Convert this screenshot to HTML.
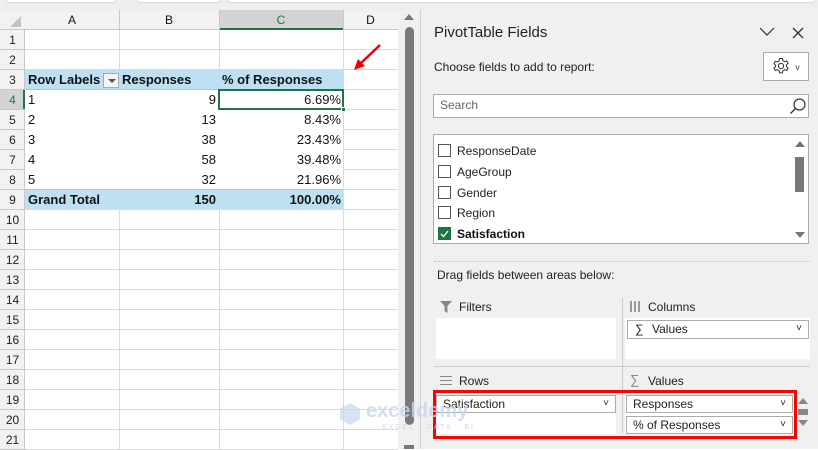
<!DOCTYPE html>
<html><head><meta charset="utf-8"><style>
*{margin:0;padding:0;box-sizing:border-box}
body{width:818px;height:449px;overflow:hidden;background:#fff;font-family:"Liberation Sans",sans-serif;position:relative}
.a{position:absolute}
.hl{position:absolute;height:1px;background:#dadada}
.vl{position:absolute;width:1px;background:#dadada}
.rn{position:absolute;left:0;width:25px;text-align:center;font-size:12px;color:#222;line-height:20px}
.c{position:absolute;font-size:13px;line-height:20px;color:#111}
.p{font-size:12px;color:#222}
.dd{position:absolute;background:#fff;border:1px solid #ababab;font-size:12px;line-height:16px;padding-left:6px;color:#222}
.dd i{position:absolute;right:6px;top:0;font-style:normal;font-size:10px}
.cb{position:absolute;left:438px;width:13px;height:13px;border:1px solid #555;background:#fff}
</style></head><body>
<!-- top strip -->
<div class="a" style="left:0;top:0;width:818px;height:10px;background:#eceef0"></div>
<div class="a" style="left:6px;top:0;width:110px;height:3px;background:#fff;border:1px solid #d6d6d6;border-top:none;border-radius:0 0 3px 3px"></div>
<div class="a" style="left:137px;top:0;width:84px;height:3px;background:#fff;border:1px solid #d6d6d6;border-top:none;border-radius:0 0 3px 3px"></div>
<div class="a" style="left:227px;top:0;width:588px;height:3px;background:#fff;border:1px solid #d6d6d6;border-top:none;border-radius:0 0 3px 3px"></div>
<!-- headers -->
<div class="a" style="left:0;top:10px;width:398px;height:20px;background:#f2f2f2;border-bottom:1px solid #c8c8c8"></div>
<div class="a" style="left:219px;top:10px;width:124px;height:20px;background:#d3d3d3;border-bottom:2px solid #217346"></div>
<div class="a" style="left:0;top:30px;width:25px;height:419px;background:#f2f2f2;border-right:1px solid #c8c8c8"></div>
<div class="a" style="left:0;top:90px;width:25px;height:20px;background:#d3d3d3;border-right:2px solid #217346"></div>
<div class="a" style="left:10px;top:16px;width:0;height:0;border-left:11px solid transparent;border-bottom:11px solid #c4c4c4"></div>
<div class="c" style="left:25px;top:10px;width:94px;text-align:center;font-size:12px">A</div>
<div class="c" style="left:119px;top:10px;width:100px;text-align:center;font-size:12px">B</div>
<div class="c" style="left:219px;top:10px;width:124px;text-align:center;font-size:12px;color:#217346">C</div>
<div class="c" style="left:343px;top:10px;width:55px;text-align:center;font-size:12px">D</div>
<div class="vl" style="left:119px;top:10px;height:20px;background:#c8c8c8"></div>
<div class="vl" style="left:219px;top:10px;height:20px;background:#c8c8c8"></div>
<div class="vl" style="left:343px;top:10px;height:20px;background:#c8c8c8"></div>
<!-- grid -->
<div class="vl" style="left:119px;top:30px;height:419px"></div>
<div class="vl" style="left:219px;top:30px;height:419px"></div>
<div class="vl" style="left:343px;top:30px;height:419px"></div>
<div id="g"></div>
<script>
var s='';for(var i=1;i<=21;i++){var t=30+(i-1)*20;s+='<div class="hl" style="left:25px;top:'+(t+19)+'px;width:373px"></div><div class="hl" style="left:0;top:'+(t+19)+'px;width:25px;background:#c8c8c8"></div><div class="rn" style="top:'+t+'px'+(i==4?';color:#217346':'')+'">'+i+'</div>';}
document.getElementById('g').innerHTML=s;
</script>
<!-- pivot -->
<div class="a" style="left:25px;top:70px;width:318px;height:19px;background:#bde0f2"></div>
<div class="a" style="left:25px;top:190px;width:318px;height:19px;background:#bde0f2"></div>
<div class="a" style="left:25px;top:89px;width:318px;height:101px;background:#fff"></div>
<div class="a" style="left:25px;top:89px;width:318px;height:1px;background:#9bc9e6"></div>
<div class="a" style="left:25px;top:189px;width:318px;height:1px;background:#9bc9e6"></div>
<div class="c" style="left:28px;top:70px;font-weight:bold">Row Labels</div>
<div class="a" style="left:103px;top:73px;width:16px;height:15px;border:1px solid #aaa;background:#f4f4f4"><div class="a" style="left:4px;top:5px;border-left:4px solid transparent;border-right:4px solid transparent;border-top:4px solid #555"></div></div>
<div class="c" style="left:122px;top:70px;font-weight:bold">Responses</div>
<div class="c" style="left:222px;top:70px;font-weight:bold">% of Responses</div>
<div class="c" style="left:28px;top:90px">1</div><div class="c" style="left:119px;top:90px;width:97px;text-align:right">9</div><div class="c" style="left:219px;top:90px;width:122px;text-align:right">6.69%</div>
<div class="c" style="left:28px;top:110px">2</div><div class="c" style="left:119px;top:110px;width:97px;text-align:right">13</div><div class="c" style="left:219px;top:110px;width:122px;text-align:right">8.43%</div>
<div class="c" style="left:28px;top:130px">3</div><div class="c" style="left:119px;top:130px;width:97px;text-align:right">38</div><div class="c" style="left:219px;top:130px;width:122px;text-align:right">23.43%</div>
<div class="c" style="left:28px;top:150px">4</div><div class="c" style="left:119px;top:150px;width:97px;text-align:right">58</div><div class="c" style="left:219px;top:150px;width:122px;text-align:right">39.48%</div>
<div class="c" style="left:28px;top:170px">5</div><div class="c" style="left:119px;top:170px;width:97px;text-align:right">32</div><div class="c" style="left:219px;top:170px;width:122px;text-align:right">21.96%</div>
<div class="c" style="left:28px;top:190px;font-weight:bold">Grand Total</div><div class="c" style="left:119px;top:190px;width:97px;text-align:right;font-weight:bold">150</div><div class="c" style="left:219px;top:190px;width:122px;text-align:right;font-weight:bold">100.00%</div>
<div class="a" style="left:218px;top:89px;width:126px;height:21px;border:2px solid #217346"></div>
<div class="a" style="left:341px;top:107px;width:5px;height:5px;background:#217346;border:1px solid #fff"></div>
<svg class="a" style="left:350px;top:40px" width="35" height="35"><line x1="30" y1="5" x2="10" y2="24" stroke="#e00" stroke-width="2.5"/><polygon points="4,30 8,19 15,26" fill="#e00"/></svg>
<!-- scrollbar -->
<div class="a" style="left:398px;top:10px;width:22px;height:439px;background:#f0f0f0"></div>
<div class="a" style="left:404px;top:14px;width:0;height:0;border-left:5px solid transparent;border-right:5px solid transparent;border-bottom:6px solid #777"></div>
<div class="a" style="left:405px;top:27px;width:9px;height:398px;background:#7a7a7a;border-radius:5px"></div>
<div class="a" style="left:404px;top:445px;width:10px;height:4px;background:#777"></div>
<!-- panel -->
<div class="a" style="left:420px;top:10px;width:398px;height:439px;background:#f0f0f0;border-left:1px solid #d0d0d0"></div>
<div class="a" style="left:434px;top:24px;font-size:15px;color:#222">PivotTable Fields</div>
<svg class="a" style="left:759px;top:27px" width="16" height="10"><polyline points="1,1 8,8 15,1" fill="none" stroke="#333" stroke-width="1.2"/></svg>
<svg class="a" style="left:792px;top:27px" width="12" height="12"><path d="M1,1L11,11M11,1L1,11" stroke="#333" stroke-width="1.3"/></svg>
<div class="a p" style="left:434px;top:60px">Choose fields to add to report:</div>
<div class="a" style="left:763px;top:52px;width:46px;height:29px;background:#fff;border:1px solid #aaa"></div>
<svg class="a" style="left:772px;top:57px" width="18" height="18" viewBox="0 0 18 18"><circle cx="9" cy="9" r="2.6" fill="none" stroke="#333"/><path d="M7.6,1.5h2.8l.5,2.2 1.7,1 2.1-.8 1.4,2.4-1.7,1.5v1.8l1.7,1.5-1.4,2.4-2.1-.8-1.7,1-.5,2.2H7.6l-.5-2.2-1.7-1-2.1.8-1.4-2.4 1.7-1.5V8.2L1.9,6.7l1.4-2.4 2.1.8 1.7-1z" fill="none" stroke="#333"/></svg>
<div class="a" style="left:795px;top:63px;font-size:9px;color:#333">&#x2C5;</div>
<div class="a" style="left:433px;top:94px;width:376px;height:24px;background:#fff;border:1px solid #aaa"></div>
<div class="a" style="left:440px;top:98px;font-size:12px;color:#666">Search</div>
<svg class="a" style="left:789px;top:97px" width="18" height="18"><circle cx="10.5" cy="7.5" r="5.5" fill="none" stroke="#333" stroke-width="1.2"/><line x1="6.5" y1="11.5" x2="1.5" y2="16.5" stroke="#333" stroke-width="1.3"/></svg>
<div class="a" style="left:433px;top:134px;width:376px;height:110px;background:#fff;border:1px solid #aaa"></div>
<div class="cb" style="top:144px"></div><div class="a p" style="left:457px;top:144px">ResponseDate</div>
<div class="cb" style="top:165px"></div><div class="a p" style="left:457px;top:165px">AgeGroup</div>
<div class="cb" style="top:186px"></div><div class="a p" style="left:457px;top:186px">Gender</div>
<div class="cb" style="top:206px"></div><div class="a p" style="left:457px;top:206px">Region</div>
<div class="cb" style="top:227px;background:#217346;border-color:#217346"><svg width="11" height="11" style="position:absolute;left:0;top:0"><polyline points="2,6 4.5,8.5 9,3" fill="none" stroke="#fff" stroke-width="1.3"/></svg></div>
<div class="a p" style="left:457px;top:227px;font-weight:bold;color:#111">Satisfaction</div>
<div class="a" style="left:795px;top:141px;border-left:5px solid transparent;border-right:5px solid transparent;border-bottom:6px solid #777"></div>
<div class="a" style="left:795px;top:157px;width:9px;height:35px;background:#777"></div>
<div class="a" style="left:795px;top:232px;border-left:5px solid transparent;border-right:5px solid transparent;border-top:6px solid #777"></div>
<div class="a" style="left:434px;top:261px;width:376px;border-top:1px dotted #bbb"></div>
<div class="a p" style="left:437px;top:268px">Drag fields between areas below:</div>
<svg class="a" style="left:440px;top:301px" width="12" height="12"><polygon points="0,0 12,0 7.5,5 7.5,12 4.5,10 4.5,5" fill="#888"/></svg>
<div class="a p" style="left:459px;top:300px">Filters</div>
<div class="a" style="left:630px;top:301px;width:10px;height:11px;border-left:2px solid #999;border-right:2px solid #999"><div class="a" style="left:2px;top:0;width:2px;height:11px;background:#999"></div></div>
<div class="a p" style="left:648px;top:300px">Columns</div>
<div class="a" style="left:622px;top:298px;width:1px;height:135px;background:#ccc"></div>
<div class="a" style="left:436px;top:318px;width:180px;height:41px;background:#fff"></div>
<div class="a" style="left:625px;top:318px;width:185px;height:41px;background:#fff"></div>
<div class="dd" style="left:627px;top:320px;width:182px;height:19px;padding-left:24px">Values<i>&#x2C5;</i><span class="a" style="left:7px;top:0">&sum;</span></div>
<div class="a" style="left:434px;top:366px;width:376px;height:1px;background:#ccc"></div>
<div class="a" style="left:440px;top:376px;width:12px;height:9px;border-top:1px solid #888;border-bottom:1px solid #888"><div class="a" style="left:0;top:3px;width:12px;height:1px;background:#888"></div></div>
<div class="a p" style="left:459px;top:374px">Rows</div>
<div class="a" style="left:630px;top:372px;font-size:13px;color:#888">&sum;</div>
<div class="a p" style="left:648px;top:374px">Values</div>
<div class="a" style="left:436px;top:393px;width:180px;height:41px;background:#fff"></div>
<div class="a" style="left:625px;top:393px;width:170px;height:41px;background:#fff"></div>
<div class="dd" style="left:436px;top:395px;width:180px;height:18px">Satisfaction<i>&#x2C5;</i></div>
<div class="dd" style="left:626px;top:395px;width:167px;height:18px">Responses<i>&#x2C5;</i></div>
<div class="dd" style="left:626px;top:416px;width:167px;height:18px">% of Responses<i>&#x2C5;</i></div>
<div class="a" style="left:798px;top:398px;border-left:5px solid transparent;border-right:5px solid transparent;border-bottom:6px solid #888"></div>
<div class="a" style="left:798px;top:409px;width:10px;height:6px;background:#888"></div>
<div class="a" style="left:798px;top:420px;border-left:5px solid transparent;border-right:5px solid transparent;border-top:6px solid #888"></div>
<div class="a" style="left:433px;top:390px;width:364px;height:49px;border:3px solid #f00"></div>
<!-- watermark -->
<div class="a" style="left:340px;top:403px;width:20px;height:22px;background:#c9d6ee;opacity:.7;clip-path:polygon(50% 0,100% 25%,100% 75%,50% 100%,0 75%,0 25%)"></div>
<div class="a" style="left:366px;top:400px;font-size:20px;font-weight:bold;color:#c9d6ee;opacity:.8">exceldemy</div>
<div class="a" style="left:382px;top:424px;font-size:7px;letter-spacing:2px;color:#ccd;opacity:.8">EXCEL · DATA · BI</div>
</body></html>
